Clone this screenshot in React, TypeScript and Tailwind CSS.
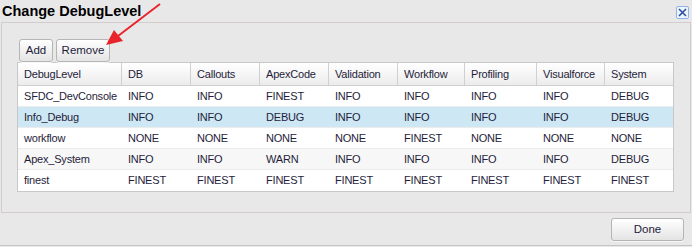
import React from 'react';

const columns = [
  { name: 'DebugLevel', w: 'w-[104px]' },
  { name: 'DB', w: 'w-[69px]' },
  { name: 'Callouts', w: 'w-[69px]' },
  { name: 'ApexCode', w: 'w-[69px]' },
  { name: 'Validation', w: 'w-[69px]' },
  { name: 'Workflow', w: 'w-[67px]' },
  { name: 'Profiling', w: 'w-[72px]' },
  { name: 'Visualforce', w: 'w-[68px]' },
  { name: 'System', w: 'w-[69px]' },
];

const rows = [
  ['SFDC_DevConsole', 'INFO', 'INFO', 'FINEST', 'INFO', 'INFO', 'INFO', 'INFO', 'DEBUG'],
  ['Info_Debug', 'INFO', 'INFO', 'DEBUG', 'INFO', 'INFO', 'INFO', 'INFO', 'DEBUG'],
  ['workflow', 'NONE', 'NONE', 'NONE', 'NONE', 'FINEST', 'NONE', 'NONE', 'NONE'],
  ['Apex_System', 'INFO', 'INFO', 'WARN', 'INFO', 'INFO', 'INFO', 'INFO', 'DEBUG'],
  ['finest', 'FINEST', 'FINEST', 'FINEST', 'FINEST', 'FINEST', 'FINEST', 'FINEST', 'FINEST'],
];

const rowBg = (i: number) => {
  if (i === 1) return 'bg-[#cde8f4]';
  if (i === 3) return 'bg-[#f7f7f7]';
  return 'bg-white';
};

const btn =
  'h-[23px] text-[11.5px] border border-[#b5b5b5] rounded-[3px] bg-gradient-to-b from-white to-[#e4e4e4] text-[#1f1d3a] shadow-[0_1px_0_#f6f6f6]';

const App = () => {
  return (
    <div className="relative w-[692px] h-[247px] bg-[#e8e8e8] font-['Liberation_Sans',sans-serif] text-[#1f1d3a] overflow-hidden">
      <div className="flex items-center justify-between h-[22px] pl-[2px] pr-[3px]">
        <h1 className="text-[14.5px] font-bold text-black leading-none">Change DebugLevel</h1>
        <button className="w-[13px] h-[13px] border border-[#8fb3e8] rounded-[2px] bg-[#eef4fc] flex items-center justify-center mt-[2px]">
          <svg width="9" height="9" viewBox="0 0 9 9">
            <path d="M1 1 L8 8 M8 1 L1 8" stroke="#2a4f9e" strokeWidth="1.6" />
          </svg>
        </button>
      </div>

      <div className="mx-[1px] h-[191px] border border-[#d2cccc] pt-[16px] pl-[15px]">
        <div className="flex gap-[3px] pl-[2px]">
          <button className={`${btn} w-[34px]`}>Add</button>
          <button className={`${btn} w-[54px]`}>Remove</button>
        </div>

        <div className="w-[657px] border border-[#c8c8c8] bg-white text-[11px] tracking-[-0.2px]">
          <div className="flex h-[23px] bg-gradient-to-b from-white to-[#ececec] border-b border-[#d0d0d0]">
            {columns.map((c, i) => (
              <div
                key={c.name}
                className={`${c.w} shrink-0 flex items-center pl-[6px] ${i < columns.length - 1 ? 'border-r border-[#d0d0d0]' : ''}`}
              >
                {c.name}
              </div>
            ))}
          </div>
          {rows.map((r, i) => (
            <div
              key={r[0]}
              className={`flex h-[21px] ${rowBg(i)} ${i < rows.length - 1 ? 'border-b border-[#ececec]' : ''}`}
            >
              {r.map((cell, j) => (
                <div key={j} className={`${columns[j].w} shrink-0 flex items-center pl-[6px]`}>
                  {cell}
                </div>
              ))}
            </div>
          ))}
        </div>
      </div>

      <div className="flex justify-end pr-[8px] pt-[5px]">
        <button className={`${btn} w-[73px]`}>Done</button>
      </div>

      <div className="absolute left-0 right-0 top-[245px] h-[1px] bg-[#c4c4c4]" />

      <svg className="absolute left-0 top-0 pointer-events-none" width="692" height="247">
        <line x1="160" y1="4" x2="118" y2="36" stroke="#e8232b" strokeWidth="2" />
        <polygon points="106,45 114,30 123,41" fill="#e8232b" />
      </svg>
    </div>
  );
};

export default App;
